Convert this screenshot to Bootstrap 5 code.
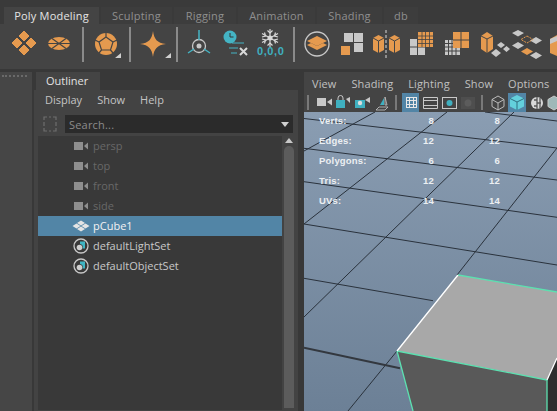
<!DOCTYPE html>
<html lang="en">
<head>
<meta charset="UTF-8">
<title>Outliner</title>
<link href="https://cdn.jsdelivr.net/npm/bootstrap@5.3.1/dist/css/bootstrap.min.css" rel="stylesheet">
<script src="https://cdn.jsdelivr.net/npm/bootstrap@5.3.1/dist/js/bootstrap.bundle.min.js"></script>
<style>
html, body { width: 557px; height: 411px; overflow: hidden; }
body { background: #383838; font-family: "Open Sans", "Liberation Sans", sans-serif; font-size: 11px; color: #c8c8c8; letter-spacing: .2px; }
svg { display: block; flex: none; }

/* shelf */
.shelf-tabs { height: 24px; padding: 7px 0 0 4px; gap: 2px; background: #3a3a3a; }
.shelf-tab { height: 17px; line-height: 17px; background: #3d3d3d; color: #8f8f8f; text-align: center; }
.shelf-tab.on { background: #444; color: #e4e4e4; }
.shelf-bar { height: 45px; background: #444; }
.shelf-gap { height: 3px; background: #383838; }

/* panels */
.work { height: 339px; }
.dock-strip { width: 32px; background: #464646; }
.dots { width: 25px; margin: 3px 0 0 2px; border-top: 2px dotted #6a6a6a; }
.outliner { width: 266px; margin-left: 2px; }
.out-tab { width: 64px; height: 18px; margin-left: 2px; padding-left: 10px; line-height: 18px; background: #444; color: #e2e2e2; letter-spacing: 0; }
.out-body { width: 264px; height: 321px; background: #434343; }
.out-menu { height: 21px; margin-bottom: 4px; padding-left: 11px; gap: 15px; align-items: center; color: #c4c4c4; letter-spacing: 0; }
.out-search { height: 18px; margin-top: 1px; padding-left: 9px; gap: 8px; align-items: center; }
.search-box { width: 228px; height: 18px; padding: 0 4px; line-height: 18px; background: #2b2b2b; color: #8c8c8c; }
.search-box span { padding-top: 2px; }
.search-box i { border-top: 5px solid #d0d0d0; border-left: 4px solid transparent; border-right: 4px solid transparent; }
.out-lower { margin: 3px 0 0 4px; height: 274px; }
.out-list { width: 246px; background: #393939; letter-spacing: 0; }
.out-row { height: 20px; padding-left: 35px; gap: 4px; align-items: center; }
.out-row.off { color: #686868; }
.out-row.sel { background: #5285a6; color: #f2f2f2; }
.out-row .slot { width: 16px; display: flex; justify-content: center; }
.out-scroll { width: 10px; padding-top: 2px; }
.out-scroll i { border-bottom: 5px solid #c8c8c8; border-left: 4px solid transparent; border-right: 4px solid transparent; margin: 0 auto 3px; width: 0; display: block; }
.out-scroll b { display: block; height: 262px; background: #5c5c5c; border-radius: 5px 5px 0 0; }
.view { width: 253px; margin-left: 4px; }
.view-menu { height: 21px; padding: 4px 0 0 8px; gap: 15px; background: #444; color: #c0c0c0; white-space: nowrap; letter-spacing: .1px; }
.view-tools { height: 19px; background: #444; }
.view-stage { position: relative; height: 299px; overflow: hidden; }
.view-stage > svg { position: absolute; left: 0; top: 0; }
.view-stats { position: absolute; left: 15px; top: -1px; display: grid; grid-template-columns: 85px 30px 66px; grid-auto-rows: 20px; align-items: center; font-family: "Liberation Sans", sans-serif; font-size: 9.5px; font-weight: 700; letter-spacing: .2px; color: #eceff2; }
.view-stats span:not(.stat-name) { text-align: right; }
.zero-text { font-family: "Liberation Sans", sans-serif; font-size: 11px; font-weight: 700; letter-spacing: .6px; fill: #3fb0c0; }
</style>
</head>
<body>
<svg width="0" height="0" style="position:absolute">
  <symbol id="cam" viewBox="0 0 15 10"><rect x="0" y="1" width="9" height="8" fill="currentColor"/><path d="M10 5 14 1.500V8.500Z" fill="currentColor"/></symbol>
  <symbol id="setdot" viewBox="0 0 16 16"><circle cx="8" cy="8" r="7" fill="none" stroke="#c8c8c8" stroke-width="1.300"/><path d="M7 3.500h5v7H9.500A3 3 0 0 0 7 6Z" fill="#3fb5c4"/><circle cx="6.500" cy="9.500" r="2.800" fill="#cfcfcf"/></symbol>
</svg>

<div class="shelf-gap"></div>
<div class="shelf-tabs d-flex" style="margin-top:-3px">
  <div class="shelf-tab on" style="width:95px">Poly Modeling</div>
  <div class="shelf-tab" style="width:71px">Sculpting</div>
  <div class="shelf-tab" style="width:62px">Rigging</div>
  <div class="shelf-tab" style="width:77px">Animation</div>
  <div class="shelf-tab" style="width:65px">Shading</div>
  <div class="shelf-tab" style="width:34px">db</div>
</div>

<div class="shelf-bar">
  <svg width="557" height="45" viewBox="0 24 557 45">
    <g fill="#e59a4f">
      <path d="M24 31l5 5-5 5-5-5ZM17 38l5 5-5 5-5-5ZM31 38l5 5-5 5-5-5ZM24 45l5 5-5 5-5-5Z" stroke="#e59a4f" stroke-linejoin="round"/>
      <ellipse cx="59" cy="43.500" rx="11" ry="6.500"/>
      <circle cx="106" cy="44" r="11"/>
      <path d="M153 31c1 8 4 12 13 13-9 1-12 5-13 13-1-8-4-12-13-13 9-1 12-5 13-13Z"/>
    </g>
    <path d="M52 38.500 66 48.500M66 38.500 52 48.500M48 43.500H70" stroke="#444" stroke-width="1.200" fill="none"/>
    <path d="M106 37l7 5-2.500 8h-9L99 42ZM106 37v-4M113 42l4-2M110.500 50l2.500 3M101.500 50 99 53M99 42l-4-2" stroke="#444" stroke-width="1.200" fill="none"/>
    <path d="M121 53v5h-6ZM171 53v5h-6Z" fill="#cfcfcf"/>
    <g fill="#8a8a8a"><rect x="82" y="27" width="2" height="35"/><rect x="129" y="27" width="2" height="35"/><rect x="176" y="27" width="2" height="35"/><rect x="293" y="27" width="2" height="35"/></g>
    <circle cx="199" cy="46" r="6.500" fill="none" stroke="#c8c8c8" stroke-width="1.300"/>
    <circle cx="199" cy="46" r="2.500" fill="#c8c8c8"/>
    <path d="M199 30v10M194 49l-6 4M204 49l6 4" stroke="#44b4c4" stroke-width="1.500"/>
    <circle cx="230" cy="37" r="6.500" fill="#44b4c4"/>
    <path d="M230 33v4h3.500" stroke="#333" fill="none"/>
    <path d="M232 43h12M229 48h9M231 53h6" stroke="#44b4c4" fill="none"/>
    <path d="M240 48l7 7M247 48l-7 7" stroke="#d8d8d8" stroke-width="2"/>
    <g stroke="#d8d8d8" stroke-width="1.200" fill="none">
      <path d="M270 29v18M262 33.500l16 9M278 33.500l-16 9"/>
      <path d="M267.500 30.500 270 33l2.500-2.500M267.500 45.500 270 43l2.500 2.500M262 37l3.500-1-1-3.500M278 37l-3.500-1 1-3.500M262 39l3.500 1-1 3.500M278 39l-3.500 1 1 3.500"/>
    </g>
    <circle cx="270" cy="38" r="2.500" fill="#d8d8d8"/>
    <text class="zero-text" x="257" y="55">0,0,0</text>
    <circle cx="317" cy="44" r="12" fill="none" stroke="#c8c8c8" stroke-width="1.300"/>
    <path d="M317 36l10 5-10 5-10-5Z" fill="#e59a4f"/><path d="M307 45l4-2 6 3 6-3 4 2-10 5Z" fill="#e59a4f"/>
    <g fill="#c8c8c8"><rect x="344" y="33" width="9" height="9"/><rect x="354" y="33" width="9" height="9"/><rect x="354" y="43" width="9" height="9"/></g>
    <rect x="341" y="46" width="9" height="9" fill="#e59a4f"/>
    <g fill="#e59a4f"><path d="M373 38l5.500-3 5.500 3v12l-5.500 3-5.500-3Z"/><path d="M389 38l5.500-3 5.500 3v12l-5.500 3-5.500-3Z"/></g>
    <path d="M373 38l5.500 3 5.500-3M378.500 41v12M389 38l5.500 3 5.500-3M394.500 41v12" stroke="#444" fill="none"/>
    <path d="M386 30v28" stroke="#d8d8d8" stroke-dasharray="3 2"/>
    <rect x="410" y="39" width="15" height="16" fill="#c8c8c8"/>
    <path d="M417.500 39v16M410 47h15" stroke="#444"/>
    <rect x="418" y="32" width="15" height="15" fill="#e59a4f"/>
    <path d="M422 32v15M425.500 32v15M429.500 32v15M418 36h15M418 39.500h15M418 43.500h15" stroke="#444" stroke-width=".8"/>
    <rect x="445" y="40" width="15" height="15" fill="#c8c8c8"/>
    <path d="M448.500 40v15M452 40v15M456 40v15M445 43.500h15M445 47h15M445 51h15" stroke="#444"/>
    <rect x="453" y="32" width="16" height="16" fill="#e59a4f"/>
    <path d="M461 32v16M453 40h16" stroke="#444"/>
    <path d="M481 36l6-4 6 4v13l-6 4-6-4Z" fill="#e59a4f"/>
    <path d="M481 36l6 3 6-3M487 39v14" stroke="#444" fill="none"/>
    <g fill="#c8c8c8"><path d="M497 45l4-3 4 3-4 3ZM491 53l5-4 5 4-5 4ZM503 49l3.500-3 3.500 3-3.500 3Z"/></g>
    <g fill="#c8c8c8"><path d="M518 30l6 3-6 3.500-6-3.500ZM536 37l6 3.500-6 3.500-6-3.500ZM518 42l6 3.500-6 3.500-6-3.500ZM536 52l6 3.500-6 3.500-6-3.500Z"/></g>
    <path d="M527 48l6 3.500-6 3.500-6-3.500Z" fill="#e59a4f"/>
    <path d="M527 36l6 3.500-6 3.500-6-3.500Z" fill="none" stroke="#e59a4f" stroke-dasharray="2 1"/>
    <path d="M557 35l-7 4v14l7 3Z" fill="#e59a4f"/><path d="M550 39l7-3v5l-7 3Z" fill="#c8c8c8"/>
  </svg>
</div>
<div class="shelf-gap"></div>

<div class="work d-flex">
  <div class="dock-strip"><div class="dots"></div></div>

  <div class="outliner d-flex flex-column">
    <div class="out-tab">Outliner</div>
    <div class="out-body">
      <div class="out-menu d-flex"><span>Display</span><span>Show</span><span>Help</span></div>
      <div class="out-search d-flex">
        <svg width="14" height="16" viewBox="0 0 14 16"><path d="M1 4V1h3M10 1h3v3M13 12v3h-3M4 15H1v-3M1 6v4M13 6v4M6 1h2M6 15h2" fill="none" stroke="#6e6e6e" stroke-width="1.200"/></svg>
        <div class="search-box d-flex justify-content-between align-items-center"><span>Search...</span><i></i></div>
      </div>
      <div class="out-lower d-flex">
        <div class="out-list">
          <div class="out-row off d-flex"><span class="slot"><svg width="15" height="10" style="color:#8e8e8e"><use href="#cam"/></svg></span>persp</div>
          <div class="out-row off d-flex"><span class="slot"><svg width="15" height="10" style="color:#8e8e8e"><use href="#cam"/></svg></span>top</div>
          <div class="out-row off d-flex"><span class="slot"><svg width="15" height="10" style="color:#8e8e8e"><use href="#cam"/></svg></span>front</div>
          <div class="out-row off d-flex"><span class="slot"><svg width="15" height="10" style="color:#8e8e8e"><use href="#cam"/></svg></span>side</div>
          <div class="out-row sel d-flex"><span class="slot"><svg width="18" height="12" viewBox="0 0 18 12" style="margin:0 -1px"><path d="M9 .5 13 3 9 5.500 5 3ZM4.500 3.500 8.500 6 4.500 8.500.5 6ZM13.500 3.500 17.500 6 13.500 8.500 9.500 6ZM9 6.500 13 9 9 11.500 5 9Z" fill="#e4e4e4"/></svg></span>pCube1</div>
          <div class="out-row d-flex"><span class="slot"><svg width="16" height="16"><use href="#setdot"/></svg></span>defaultLightSet</div>
          <div class="out-row d-flex"><span class="slot"><svg width="16" height="16"><use href="#setdot"/></svg></span>defaultObjectSet</div>
        </div>
        <div class="out-scroll ms-auto me-1" style="margin-left:2px!important"><i></i><b></b></div>
      </div>
    </div>
  </div>

  <div class="view d-flex flex-column">
    <div class="view-menu d-flex"><span>View</span><span>Shading</span><span>Lighting</span><span>Show</span><span>Options</span></div>
    <div class="view-tools">
      <svg width="253" height="19" viewBox="304 93 253 19">
        <rect x="402" y="93" width="17" height="19" fill="#5285a6"/>
        <rect x="508" y="93" width="18" height="19" fill="#5285a6"/>
        <path d="M308 95v15M396 95v15M482 95v15" stroke="#8a8a8a" stroke-width="1.500"/>
        <rect x="317" y="98" width="9" height="8" fill="#c8c8c8"/><path d="M327 102l5-3.500v7Z" fill="#c8c8c8"/>
        <rect x="336" y="100" width="9" height="8" fill="#3fb0c0"/><path d="M338 100v-2a2.500 2.500 0 0 1 5 0v2" stroke="#c8c8c8" fill="none"/><path d="M346 99l4-2v6Z" fill="#c8c8c8"/>
        <rect x="355" y="100" width="10" height="8" fill="#3fb0c0"/><circle cx="360" cy="103" r="2.200" fill="#ddd"/><path d="M365 100l5-3v6Z" fill="#c8c8c8"/>
        <path d="M380 105l4-7v7Z" fill="#3fb0c0"/><path d="M385 97v8h2ZM376 110l3-3h9l-3 3Z" fill="none" stroke="#c8c8c8" stroke-width=".8"/>
        <rect x="406.500" y="97.500" width="10" height="10" fill="none" stroke="#e8e8e8"/><path d="M409.500 98v9M413.500 98v9M407 100.500h9M407 104.500h9" stroke="#e8e8e8"/>
        <path d="M423.500 97.500h14v11h-14ZM423.500 100.500h14M423.500 105.500h14" fill="none" stroke="#c8c8c8"/>
        <rect x="442.500" y="97.500" width="14" height="11" fill="none" stroke="#c8c8c8"/><circle cx="449.500" cy="103" r="3" fill="#3fb0c0"/>
        <rect x="461" y="97" width="14" height="12" fill="#4e4e4e"/><circle cx="468" cy="103" r="3.500" fill="#5c5c5c"/>
        <path d="M498 96l6 3.500v7l-6 3.500-6-3.500v-7ZM492 99.500l6 3.500 6-3.500M498 103v7" fill="none" stroke="#c8c8c8" stroke-width=".9"/>
        <path d="M517 95l7 3.500v8l-7 3.500-7-3.500v-8Z" fill="#63d0dc"/><path d="M510 98.500l7 3.500 7-3.500M517 102v8" fill="none" stroke="#2f6f80"/>
        <circle cx="537" cy="103" r="6" fill="#d8d8d8"/><path d="M537 97v12M540 98v10M534 100h3M537 103h4M534 106h3" stroke="#555" stroke-width="1.300"/>
        <path d="M554 96l6 3.500v7l-6 3.500-6-3.500v-7Z" fill="#9fb8b8" stroke="#c8c8c8"/>
      </svg>
    </div>
    <div class="view-stage">
      <svg width="253" height="299" viewBox="304 112 253 299">
        <defs><linearGradient id="floor" x1="0" y1="0" x2="0" y2="1"><stop offset="0" stop-color="#8a9db2"/><stop offset="1" stop-color="#6c8096"/></linearGradient></defs>
        <rect x="304" y="112" width="253" height="299" fill="url(#floor)"/>
        <g stroke="#2a323c" stroke-width="1" fill="none">
          <path d="M304 118.500 557 148M485 112 557 121M304 148.300 557 180M304 181.700 557 217.300M304 224 557 265M304 278.300 433 300.700"/>
          <path d="M375 112 304 151M447 112 304 224M514 112 304 317M557 148 457 275M397 351 348 411"/>
          <path d="M304 347.700 400 368.300" stroke="#33383f" stroke-width="2"/>
        </g>
        <path d="M458 275 557 292V358L547 380 397 351Z" fill="#a8a8a8"/>
        <path d="M397 351 547 380V411H413Z" fill="#595959"/>
        <path d="M547 380 557 358V411H547Z" fill="#2e2e2e"/>
        <path d="M458 275 557 292M397 351 547 380M397 351 413 411M547 380V411" stroke="#5ce0b0" stroke-width="1.300" fill="none"/>
        <path d="M458 275 397 351M557 358 547 380" stroke="#fff" stroke-width="1.300" fill="none"/>
      </svg>
      <div class="view-stats">
        <span class="stat-name">Verts:</span><span>8</span><span>8</span>
        <span class="stat-name">Edges:</span><span>12</span><span>12</span>
        <span class="stat-name">Polygons:</span><span>6</span><span>6</span>
        <span class="stat-name">Tris:</span><span>12</span><span>12</span>
        <span class="stat-name">UVs:</span><span>14</span><span>14</span>
      </div>
    </div>
  </div>
</div>
</body>
</html>
